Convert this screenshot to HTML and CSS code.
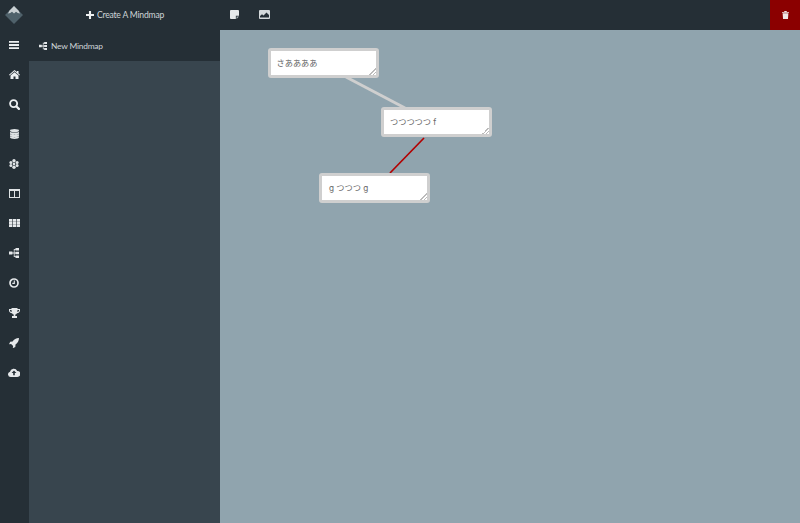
FILE: index.html
```html
<!DOCTYPE html>
<html lang="ja">
<head>
<meta charset="utf-8">
<title>Mindmap</title>
<link rel="stylesheet" href="styles.css">
</head>
<body>
<header class="topbar">
  <div class="logo-cell">
    <svg class="logo" viewBox="0 0 18 18" width="18" height="18"><path fill="#4f616a" d="M9 0 18 9 9 18 0 9z"/><path fill="#c9cfd2" d="M9 0 13.500 4.500 15 7.500 12.800 7 11 5.800 9 7.500 7 5.800 5.200 7 3 7.500 4.500 4.500z"/></svg>
  </div>
  <div class="create-cell">
    <svg class="icon-s" viewBox="0 0 10 10" width="8" height="8"><path fill="#eef1f2" d="M3.700 0h2.600v3.700H10v2.600H6.300V10H3.700V6.300H0V3.700h3.700z"/></svg>
    <span>Create A Mindmap</span>
  </div>
  <div class="tools">
    <svg viewBox="0 0 10 10" width="9" height="9"><path fill="#e6eaec" d="M1 0h8a1 1 0 0 1 1 1v5.500H6.500V10H1a1 1 0 0 1-1-1V1a1 1 0 0 1 1-1z"/><path fill="#a9b4b9" d="M7.300 10V7.300H10z"/></svg>
    <svg viewBox="0 0 11 9" width="11" height="9"><path fill="#d5dadc" fill-rule="evenodd" d="M1 0h9a1 1 0 0 1 1 1v7a1 1 0 0 1-1 1H1a1 1 0 0 1-1-1V1a1 1 0 0 1 1-1zm0 7.500h9V5L7.500 2.500 4.500 5.500 3 4.200 1 6z"/><circle cx="2.600" cy="2.500" r="1" fill="#d5dadc"/></svg>
  </div>
  <button class="trash" type="button" aria-label="Delete">
    <svg viewBox="0 0 8 9" width="7" height="8"><path fill="#f1e5e5" d="M2.800 0h2.400l.5 1H8v1H0V1h2.300zM.7 2.600h6.600L6.800 9H1.200z"/></svg>
  </button>
</header>
<div class="main">
  <nav class="rail">
    <svg viewBox="0 0 10 8" width="10" height="8"><path fill="#eceff1" d="M0 0h10v1.800H0zM0 3.100h10v1.800H0zM0 6.200h10V8H0z"/></svg>
    <svg viewBox="0 0 11 9" width="11" height="9"><path fill="#eceff1" d="M5.500 0 8 2.100V1h1.500v2.400L11 4.700l-.6.700L5.500 1.300.6 5.400 0 4.700zM5.500 2.200 9.500 5.500V9H6.500V6.500h-2V9H1.500V5.500z"/></svg>
    <svg viewBox="0 0 10 10" width="11" height="11"><circle cx="4.200" cy="4.200" r="3.200" fill="none" stroke="#eceff1" stroke-width="1.700"/><path stroke="#eceff1" stroke-width="2" stroke-linecap="round" d="M6.800 6.800 9 9"/></svg>
    <svg viewBox="0 0 9 10" width="9" height="10"><ellipse cx="4.500" cy="1.500" rx="4.500" ry="1.500" fill="#dfe3e5"/><path fill="#dfe3e5" d="M0 2.700c1 1.200 8 1.200 9 0v1.500c0 2-9 2-9 0zM0 5c1 1.200 8 1.200 9 0v1.500c0 2-9 2-9 0zM0 7.300c1 1.200 8 1.200 9 0v1c0 2.200-9 2.200-9 0z"/></svg>
    <svg viewBox="0 0 10 10" width="10" height="10"><g fill="#dfe3e5"><circle cx="5" cy="1.700" r="1.700"/><circle cx="5" cy="8.300" r="1.700"/><circle cx="1.900" cy="3.400" r="1.500"/><circle cx="8.100" cy="3.400" r="1.500"/><circle cx="1.900" cy="6.600" r="1.500"/><circle cx="8.100" cy="6.600" r="1.500"/><circle cx="5" cy="5" r="1.300"/></g></svg>
    <svg viewBox="0 0 11 9" width="11" height="9"><path fill="#dfe3e5" fill-rule="evenodd" d="M0 0h11v9H0zm1 2v6h4V2zm5 0v6h4V2z"/></svg>
    <svg viewBox="0 0 11 8" width="11" height="8"><path fill="#e6e9eb" d="M0 0h3.300v2.400H0zM3.900 0h3.200v2.400H3.900zM7.700 0H11v2.400H7.700zM0 2.800h3.300v2.400H0zM3.900 2.800h3.200v2.400H3.900zM7.700 2.800H11v2.400H7.700zM0 5.600h3.300V8H0zM3.900 5.600h3.200V8H3.900zM7.700 5.600H11V8H7.700z"/></svg>
    <svg viewBox="0 0 10 10" width="10" height="10"><path fill="#e6e9eb" d="M6.500 0H10v2.600H6.500zM6.500 3.700H10v2.600H6.500zM6.500 7.400H10V10H6.500zM0 3.400h3.400v3.200H0zM3.400 4.500h3.100v1H3.400zM4.800 1h1.700v.8H5.600v6.400h.9V9H4.800z"/></svg>
    <svg viewBox="0 0 10 10" width="10" height="10"><circle cx="5" cy="5" r="4" fill="none" stroke="#e6e9eb" stroke-width="1.700"/><path fill="none" stroke="#e6e9eb" stroke-width="1.100" d="M5.300 2.600V5.400H3.300"/></svg>
    <svg viewBox="0 0 11 10" width="11" height="10"><path fill="#e6e9eb" d="M2.500 0h6v1H11v1.500C11 4 9.800 5 8 5.200 7.500 6 6.800 6.400 6.300 6.600V8H8v2H3V8h1.700V6.600C4.200 6.400 3.500 6 3 5.200 1.200 5 0 4 0 2.500V1h2.500zM1 2v.5c0 .7.600 1.300 1.700 1.600L2.500 2zm9 0H8.500l-.2 2.100C9.400 3.800 10 3.200 10 2.500z"/></svg>
    <svg class="rocket" viewBox="0 0 10 10" width="10" height="10"><path fill="#e6e9eb" d="M10 0C9.900 3 8.700 5 6.500 6.500L6.300 9 3.800 10.200l.3-2.300-2-2L0 6.200 1.200 3.700 3.600 3.500C5 1.300 7 .1 10 0z"/></svg>
    <svg viewBox="0 0 12 9" width="12" height="9"><path fill="#e6e9eb" fill-rule="evenodd" d="M2.700 9A2.700 2.700 0 0 1 2 3.700 3.800 3.800 0 0 1 9.200 2.900 3 3 0 0 1 9.300 9zM6 2.400 3.600 5h1.600v2.300h1.600V5h1.600z"/></svg>
  </nav>
  <aside class="panel">
    <div class="panel-head">
      <svg viewBox="0 0 10 10" width="8" height="8"><path fill="#e6e9eb" d="M6.500 0H10v2.600H6.500zM6.500 3.700H10v2.600H6.500zM6.500 7.400H10V10H6.500zM0 3.400h3.400v3.200H0zM3.400 4.500h3.100v1H3.400zM4.800 1h1.700v.8H5.600v6.400h.9V9H4.800z"/></svg>
      <span>New Mindmap</span>
    </div>
  </aside>
  <section class="canvas">
    <svg class="links" width="580" height="493" viewBox="0 0 580 493">
      <line x1="126" y1="47" x2="185" y2="78" stroke="#cfcfcf" stroke-width="3"/>
      <line x1="204" y1="108" x2="170" y2="143" stroke="#b30000" stroke-width="1.700"/>
    </svg>
    <textarea class="node node-a" readonly>さああああ</textarea>
    <textarea class="node node-b" readonly>つつつつつ f</textarea>
    <textarea class="node node-c" readonly>g つつつ g</textarea>
  </section>
</div>
</body>
</html>
```
FILE: styles.css
```css
* { box-sizing: border-box; }
html, body { margin: 0; height: 100%; overflow: hidden; }
body {
  display: flex;
  flex-direction: column;
  font-family: Lato, "Noto Sans CJK JP", sans-serif;
  background: #90a4ae;
  color: #cfd5d8;
}
.topbar {
  display: flex;
  align-items: center;
  height: 30px;
  flex: none;
  background: #252f36;
}
.logo-cell { width: 29px; display: flex; justify-content: center; padding-right: 1px; }
.logo { display: block; }
.create-cell {
  width: 191px;
  display: flex;
  align-items: center;
  justify-content: center;
  gap: 3px;
  padding-left: 1px;
  font-size: 8.6px;
  letter-spacing: -0.2px;
}
.tools {
  display: flex;
  align-items: center;
  gap: 20px;
  padding: 0 0 1px 10px;
  flex: 1;
}
.trash {
  width: 30px;
  height: 30px;
  border: 0;
  padding: 0;
  background: #8b0000;
  display: flex;
  align-items: center;
  justify-content: center;
}
.main { flex: 1; display: flex; min-height: 0; }
.rail {
  width: 29px;
  flex: none;
  background: #252f36;
  display: grid;
  grid-auto-rows: 29.75px;
  align-content: start;
  place-items: center;
  padding-right: 1px;
}
.rail svg { display: block; }
.rail .rocket { margin-top: 2px; }
.panel { width: 191px; flex: none; background: #38454e; }
.panel-head {
  height: 31px;
  background: #252f36;
  display: flex;
  align-items: center;
  gap: 4px;
  padding-left: 10px;
  font-size: 8.4px;
  letter-spacing: -0.2px;
}
.canvas { position: relative; flex: 1; background: #90a4ae; }
.links { position: absolute; left: 0; top: 0; }
.node {
  position: absolute;
  width: 111px;
  height: 30px;
  margin: 0;
  padding: 6px 6px;
  border: 3px solid #cfcfcf;
  border-radius: 3px;
  background: #fff;
  color: #666;
  font-family: Inter, "Noto Sans CJK JP", sans-serif;
  font-size: 8.2px;
  line-height: 13px;
  outline: 0;
  overflow: hidden;
  resize: both;
}
.node::-webkit-resizer {
  background: linear-gradient(135deg, transparent 50%, #bbb 50%, #bbb 58%, transparent 58%, transparent 72%, #bbb 72%, #bbb 80%, transparent 80%) no-repeat right bottom / 7px 7px;
}
.node-a { left: 47.5px; top: 18px; }
.node-b { left: 161px; top: 77px; }
.node-c { left: 98.5px; top: 142.5px; padding-left: 7.5px; }
```
